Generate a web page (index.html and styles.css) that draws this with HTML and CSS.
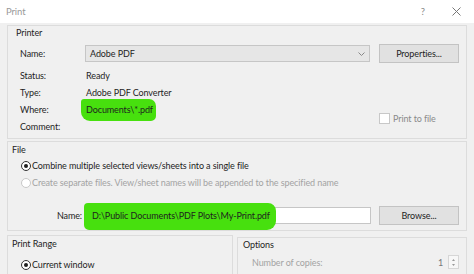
FILE: index.html
```html
<!DOCTYPE html>
<html lang="en">
<head>
    <meta charset="UTF-8">
    <meta name="viewport" content="width=device-width, initial-scale=1.0">
    <title>Print</title>
    <link rel="stylesheet" href="styles.css">
</head>
<body>
    <div class="dialog">
        <div class="titlebar">
            <span class="title">Print</span>
            <span class="help">?</span>
            <svg class="close" width="9" height="9" viewBox="0 0 9 9">
                <path d="M0.5 0.5 L8.5 8.5 M8.5 0.5 L0.5 8.5" stroke="#777" stroke-width="1" fill="none"/>
            </svg>
        </div>

        <div class="content">
            <section class="group printer">
                <div class="group-title">Printer</div>
                <div class="name-row">
                    <span class="label">Name:</span>
                    <div class="select">
                        <span>Adobe PDF</span>
                        <svg class="chevron" width="7" height="4" viewBox="0 0 7 4">
                            <path d="M0.5 0.5 L3.5 3.5 L6.5 0.5" stroke="#888" stroke-width="1" fill="none"/>
                        </svg>
                    </div>
                    <button class="btn">Properties...</button>
                </div>
                <div class="details">
                    <div class="info">
                        <div class="info-row"><span class="label">Status:</span><span>Ready</span></div>
                        <div class="info-row"><span class="label">Type:</span><span>Adobe PDF Converter</span></div>
                        <div class="info-row"><span class="label">Where:</span><span class="marked">Documents\*.pdf</span></div>
                        <div class="info-row"><span class="label">Comment:</span></div>
                    </div>
                    <div class="check">
                        <span class="box"></span>
                        <span>Print to file</span>
                    </div>
                </div>
            </section>

            <section class="group file">
                <div class="group-title">File</div>
                <div class="radio-row">
                    <span class="radio on"></span>
                    <span>Combine multiple selected views/sheets into a single file</span>
                </div>
                <div class="radio-row disabled">
                    <span class="radio"></span>
                    <span>Create separate files. View/sheet names will be appended to the specified name</span>
                </div>
                <div class="path-row">
                    <span class="path-label">Name:</span>
                    <div class="field">
                        <span class="field-mark"></span>
                        <span class="field-text">D:\Public Documents\PDF Plots\My-Print.pdf</span>
                    </div>
                    <button class="btn">Browse...</button>
                </div>
            </section>

            <div class="bottom">
                <section class="group range">
                    <div class="group-title">Print Range</div>
                    <div class="radio-row">
                        <span class="radio on"></span>
                        <span>Current window</span>
                    </div>
                </section>
                <section class="group options">
                    <div class="group-title">Options</div>
                    <div class="copies-row">
                        <span class="copies-label">Number of copies:</span>
                        <span class="copies-value">1</span>
                        <span class="spinner">
                            <svg width="7" height="11" viewBox="0 0 7 11">
                                <path d="M2 4 L3.5 2 L5 4 Z M2 7 L3.5 9 L5 7 Z" fill="#999"/>
                            </svg>
                        </span>
                    </div>
                </section>
            </div>
        </div>
    </div>
</body>
</html>
```

FILE: styles.css
```css
* {
    margin: 0;
    padding: 0;
    box-sizing: border-box;
}

body {
    font-family: Lato, 'Open Sans', sans-serif;
    font-size: 9px;
    letter-spacing: -0.1px;
    color: #1e1e1e;
    background: #f0f0f0;
    width: 474px;
    height: 274px;
    overflow: hidden;
}

.dialog {
    width: 474px;
}

.titlebar {
    height: 23px;
    background: #fff;
    display: flex;
    align-items: center;
    padding: 0 13px 0 6px;
}

.title {
    color: #999;
    font-size: 9.5px;
    flex: 1;
}

.help {
    color: #8a8a8a;
    font-size: 9.5px;
    margin-right: 27px;
}

.content {
    padding: 2px 7px 0 7px;
}

.group {
    border: 1px solid #dcdcdc;
    background: #f0f0f0;
}

.group-title {
    height: 14px;
    line-height: 14px;
    padding-left: 4px;
}

/* printer */
.printer {
    height: 114px;
    padding: 0 7px 3px 12px;
}

.printer .group-title {
    margin-left: -8px;
}

.label {
    width: 66px;
    flex-shrink: 0;
}

.name-row {
    display: flex;
    align-items: center;
    height: 19px;
    margin-top: 4px;
}

.name-row .label {
    width: 65px;
}

.select {
    width: 285px;
    height: 17px;
    background: #e6e6e6;
    border: 1px solid #c6c6c6;
    display: flex;
    align-items: center;
    justify-content: space-between;
    padding: 0 4px 0 4px;
}

.chevron {
    margin-top: 1px;
}

.btn {
    width: 80px;
    height: 19px;
    margin-left: 9px;
    background: #e1e1e1;
    border: 1px solid #c3c3c3;
    font-family: inherit;
    font-size: inherit;
    letter-spacing: inherit;
    color: #1e1e1e;
}

.details {
    display: flex;
    margin-top: 4px;
}

.info {
    flex: 1;
}

.info-row {
    display: flex;
    align-items: center;
    height: 17px;
}

.marked {
    position: relative;
    z-index: 0;
}

.marked::before {
    content: "";
    position: absolute;
    left: -5px;
    top: -5px;
    width: 75px;
    height: 22px;
    background: #47e00e;
    border-radius: 3px 7px 5px 9px;
    z-index: -1;
}

.check {
    width: 80px;
    padding-top: 45px;
    display: flex;
    align-items: center;
    color: #8a8a8a;
    height: 57px;
}

.box {
    width: 11px;
    height: 11px;
    border: 1px solid #c8c8c8;
    background: #fff;
    margin-right: 3px;
}

/* file */
.file {
    margin-top: 2px;
    height: 90px;
    padding-top: 1px;
}

.radio-row {
    display: flex;
    align-items: center;
    height: 17px;
    padding-left: 13px;
}

.radio-row.disabled {
    color: #a3a3a3;
}

.radio {
    width: 10px;
    height: 10px;
    border-radius: 50%;
    border: 1px solid #333;
    margin-right: 1px;
    position: relative;
    background: #fff;
}

.radio.on::after {
    content: "";
    position: absolute;
    left: 2px;
    top: 2px;
    width: 4px;
    height: 4px;
    border-radius: 50%;
    background: #1e1e1e;
}

.disabled .radio {
    border-color: #c8c8c8;
}

.path-row {
    display: flex;
    align-items: center;
    height: 19px;
    margin-top: 15px;
    padding-left: 12px;
}

.path-label {
    width: 65px;
    text-align: right;
    padding-right: 3px;
}

.field {
    position: relative;
    width: 286px;
    height: 17px;
    background: #fff;
    border: 1px solid #c6c6c6;
    display: flex;
    align-items: center;
    padding-left: 6px;
}

.field-mark {
    position: absolute;
    left: -2px;
    top: -5px;
    width: 192px;
    height: 27px;
    background: #47e00e;
    border-radius: 4px 8px 9px 5px;
}

.field-text {
    position: relative;
}

.path-row .btn {
    margin-left: 8px;
}

/* bottom row */
.bottom {
    display: flex;
    gap: 4px;
    margin-top: 4px;
}

.range {
    width: 226px;
    height: 60px;
    padding-top: 1px;
}

.range .radio-row {
    margin-top: 5px;
}

.options {
    width: 230px;
    height: 60px;
    margin-top: 2px;
}

.options .group-title {
    padding-left: 5px;
}

.copies-row {
    display: flex;
    align-items: center;
    height: 18px;
    margin-top: 1px;
    padding: 0 7px 0 14px;
    color: #a3a3a3;
}

.copies-label {
    flex: 1;
}

.copies-value {
    margin-right: 5px;
    color: #777;
}

.spinner {
    width: 11px;
    height: 14px;
    border: 1px solid #d6d6d6;
    background: #f7f7f7;
    display: flex;
    align-items: center;
    justify-content: center;
}
```
